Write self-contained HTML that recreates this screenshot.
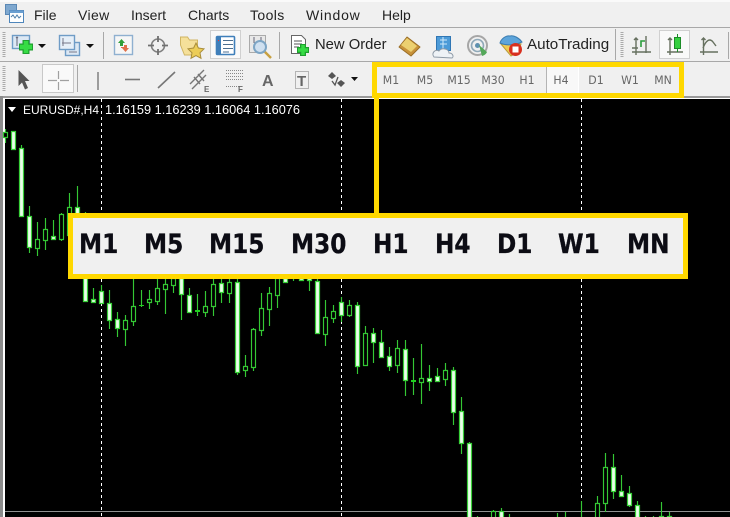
<!DOCTYPE html>
<html><head><meta charset="utf-8"><style>
html,body{margin:0;padding:0;background:#f0f0f0}
#p{position:relative;width:730px;height:517px;overflow:hidden;background:#f0f0f0;font-family:"Liberation Sans",sans-serif}
.a{position:absolute;white-space:nowrap}
.m{top:7px;font-size:14px;line-height:17px;color:#222}
.t{line-height:18px;color:#222;top:36px}
.s{top:74px;font-family:"DejaVu Sans",sans-serif;font-size:11.5px;line-height:13px;color:#666;width:34px;text-align:center;transform:scaleX(.95)}
.b{top:228px;font-family:"DejaVu Sans",sans-serif;font-weight:bold;font-size:27px;line-height:34px;color:#0c0c14;transform-origin:0 50%;transform:scaleX(.86);-webkit-text-stroke:.35px #0c0c14}
svg{position:absolute;left:0;top:0}
</style></head><body><div id="p">
<div class="a" style="left:0;top:0;width:730px;height:2px;background:#fafafa"></div>
<div class="a" style="left:0;top:27px;width:730px;height:1px;background:#a8a8a8"></div>
<div class="a" style="left:0;top:61px;width:730px;height:1px;background:#a8a8a8"></div>
<div class="a" style="left:0;top:96px;width:730px;height:2px;background:#9a9a9a"></div>
<div class="a" style="left:0;top:98px;width:730px;height:1px;background:#fff"></div>
<div class="a" style="left:0;top:99px;width:730px;height:418px;background:#000"></div>
<div class="a" style="left:0;top:96px;width:3px;height:421px;background:#8c8c8c"></div>
<div class="a" style="left:3px;top:98px;width:2px;height:419px;background:#fff"></div>

<!-- selected buttons -->
<div class="a" style="left:210px;top:30px;width:31px;height:29px;background:#f9f9f9;outline:1px solid #d0d0d0;outline-offset:-1px"></div>
<div class="a" style="left:659px;top:30px;width:31px;height:29px;background:#f9f9f9;outline:1px solid #d0d0d0;outline-offset:-1px"></div>
<div class="a" style="left:42px;top:64px;width:32px;height:29px;background:#f9f9f9;outline:1px solid #c8c8c8;outline-offset:-1px"></div>

<svg width="730" height="517" viewBox="0 0 730 517">
<!-- chart -->
<path d="M5 511.5H730" stroke="#8f8f8f" fill="none"/>
<path stroke="#fff" stroke-dasharray="3 3" fill="none" d="M101.5 99V517M341.5 99V517M581.5 99V517"/>
<path fill="none" stroke="#34c834" stroke-width="1.15" d="M5.5 129V143M13.5 131V150M21.5 145V217M29.5 206V253M37.5 222V256M45.5 218V250M53.5 220V240M61.5 213V241M69.5 193V240M77.5 186V240M85.5 212V302M93.5 288V303M101.5 285V303M109.5 290V329M117.5 312V337M125.5 315V346M133.5 278V326M141.5 290V307M149.5 290V309M157.5 278V305M165.5 278V314M173.5 278V293M181.5 278V320M189.5 288V313M197.5 294V316M205.5 291V317M213.5 278V316M221.5 278V303M229.5 278V303M237.5 278V375M245.5 355V377M253.5 328V371M261.5 293V336M269.5 287V326M277.5 278V308M285.5 278V283M293.5 278V281M301.5 278V281M309.5 278V291M317.5 278V334M325.5 300V346M333.5 305V323M341.5 297V322M349.5 300V317M357.5 302V374M365.5 326V366M373.5 328V363M381.5 330V358M389.5 347V371M397.5 340V373M405.5 340V396M413.5 358V395M421.5 344V404M429.5 365V391M437.5 368V382M445.5 363V386M453.5 367V425M461.5 397V454M469.5 442V517M477.5 516V517M493.5 510V517M501.5 508V517M509.5 514V517M557.5 513V517M565.5 512V517M581.5 501V517M597.5 496V517M605.5 453V512M613.5 454V499M621.5 475V497M629.5 486V507M637.5 501V517M645.5 516V517M653.5 516V517M661.5 502V517M669.5 512V517"/>
<path fill="#000" stroke="#34c834" stroke-width="1.15" d="M3.5 132.5h4v5h-4zM35.5 239.5h4v9h-4zM43.5 229.5h4v11h-4zM59.5 214.5h4v25h-4zM67.5 207.5h4v28h-4zM123.5 320.5h4v9h-4zM131.5 306.5h4v15h-4zM147.5 299.5h4v3h-4zM155.5 288.5h4v13h-4zM163.5 284.5h4v5h-4zM171.5 278.5h4v7h-4zM203.5 306.5h4v6h-4zM211.5 284.5h4v22h-4zM227.5 282.5h4v11h-4zM243.5 366.5h4v4h-4zM251.5 329.5h4v38h-4zM259.5 308.5h4v22h-4zM267.5 293.5h4v16h-4zM275.5 278.5h4v17h-4zM323.5 317.5h4v17h-4zM331.5 311.5h4v7h-4zM347.5 305.5h4v10h-4zM363.5 333.5h4v32h-4zM395.5 348.5h4v17h-4zM419.5 378.5h4v4h-4zM443.5 370.5h4v9h-4zM491.5 511.5h4v7h-4zM595.5 503.5h4v15h-4zM603.5 467.5h4v36h-4z"/>
<path fill="#eaffea" stroke="#38d038" stroke-width="1.2" d="M11.5 131.5h4v18h-4zM19.5 148.5h4v68h-4zM27.5 216.5h4v31h-4zM51.5 236.5h4v3h-4zM75.5 207.5h4v28h-4zM83.5 240.5h4v61h-4zM91.5 299.5h4v3h-4zM99.5 291.5h4v12h-4zM107.5 303.5h4v17h-4zM115.5 319.5h4v9h-4zM179.5 278.5h4v16h-4zM187.5 295.5h4v17h-4zM219.5 283.5h4v9h-4zM235.5 282.5h4v90h-4zM283.5 278.5h4v4h-4zM299.5 278.5h4v2h-4zM307.5 278.5h4v2h-4zM315.5 281.5h4v52h-4zM339.5 302.5h4v13h-4zM355.5 305.5h4v61h-4zM371.5 333.5h4v9h-4zM379.5 342.5h4v15h-4zM387.5 356.5h4v10h-4zM403.5 349.5h4v31h-4zM427.5 378.5h4v3h-4zM435.5 376.5h4v5h-4zM451.5 370.5h4v42h-4zM459.5 411.5h4v32h-4zM467.5 443.5h4v76h-4zM499.5 511.5h4v7h-4zM611.5 467.5h4v24h-4zM619.5 491.5h4v5h-4zM627.5 493.5h4v12h-4zM635.5 505.5h4v14h-4zM659.5 516.5h4v4h-4zM667.5 516.5h4v4h-4z"/>
<path fill="#1fd01f" d="M139 305h5v1h-5zM195 310h5v2h-5zM411 380h5v2h-5z"/>
<path d="M8 107h8l-4 5z" fill="#fff"/>

<!-- app icon -->
<rect x="5.5" y="4.5" width="11" height="10" fill="#7fa8cf" stroke="#5b88b5"/>
<rect x="9.5" y="10.5" width="14" height="12" fill="#fff" stroke="#4f86bb"/>
<path d="M11 17l2-2 2 3 2-3 2 3 2-2" fill="none" stroke="#4f7faa"/>
<rect x="9.5" y="10.5" width="14" height="2.5" fill="#6b9fd0"/>

<!-- grips -->
<path d="M4 32V58M4 66V92M622 32V58" stroke="#aaa" stroke-width="3" stroke-dasharray="1 1" fill="none"/>
<!-- separators -->
<path d="M103.5 32V59M279.5 32V59M615.5 29V60M728.5 32V59M77.5 65V92" stroke="#a8a8a8" fill="none"/>

<!-- new chart -->
<rect x="12.5" y="35.5" width="17" height="13" fill="#dce8f4" stroke="#6f9cc6" stroke-width="1.4"/>
<path d="M17 38v8M16 38l1-1 1 1M21 44h6" stroke="#667" fill="none"/>
<path d="M26 40v14M19 47h14" stroke="#1f9f2f" stroke-width="7" fill="none"/>
<path d="M26 41v12M20 47h12" stroke="#36dc44" stroke-width="4.5" fill="none"/>
<path d="M38 44h8l-4 4zM86 44h8l-4 4z" fill="#111"/>
<!-- profiles -->
<rect x="65.5" y="42.5" width="14" height="13" fill="#dce8f4" stroke="#6f9cc6" stroke-width="1.4"/>
<rect x="59.5" y="35.5" width="15" height="14" fill="#e6eff8" stroke="#6f9cc6" stroke-width="1.4"/>
<path d="M63 38v8M62 43h9M69 52h8" stroke="#778" fill="none"/>
<!-- market watch -->
<rect x="114.5" y="35.5" width="18" height="19" fill="#f6f6f6" stroke="#8fb0d0" stroke-width="1.4"/>
<path d="M118 43l3.500-4 3.500 4h-2v3h-3v-3z" fill="#2f9f3a"/>
<path d="M121 47h3v-2h3v3h2l-3.500 4-3.500-4h-1z" fill="#e0704a"/>
<!-- crosshair -->
<circle cx="158" cy="45.500" r="6.500" fill="none" stroke="#808080" stroke-width="1.600"/>
<path d="M158 36V42M158 49V55M148 45.500H154M162 45.500H168" stroke="#707070" stroke-width="1.800" fill="none"/>
<!-- folder star -->
<path d="M180.500 37h7l2 3h8v5l-6 10h-7l-4-10z" fill="#f5e09a" stroke="#d0b563"/>
<path d="M196 43l2.400 5 5.600.800-4 4 1 5.500-5-2.700-5 2.700 1-5.500-4-4 5.600-.800z" fill="#eccd58" stroke="#a88c3a"/>
<!-- navigator -->
<rect x="216.500" y="36.500" width="18" height="18" rx="1" fill="#fff" stroke="#3f7fba" stroke-width="1.600"/>
<rect x="216.500" y="36.500" width="4.500" height="18" fill="#3f7fba"/>
<path d="M223 40.500h10M223 44.500h10M223 48.500h10M223 52h6" stroke="#4d6f90" fill="none"/>
<path d="M218.500 40v1" stroke="#e33"/>
<!-- terminal magnifier -->
<rect x="249.500" y="35.500" width="16" height="17" fill="#e8e8e8" stroke="#aaa"/>
<path d="M254 37v6M261 37v6" stroke="#667" fill="none"/>
<circle cx="260" cy="47" r="6" fill="#cfe0f0" stroke="#7da5c5" stroke-width="2"/>
<path d="M265 52l6 6" stroke="#c8a040" stroke-width="2.500"/>
<!-- new order -->
<path d="M291.500 35.500h10l4 4v14h-14z" fill="#fff" stroke="#666"/>
<path d="M294 41h8M294 44h8M294 47h5" stroke="#555" fill="none"/>
<path d="M303 44v12M297 50h12" stroke="#1f9f2f" stroke-width="6" fill="none"/>
<path d="M303 45v10M298 50h10" stroke="#36dc44" stroke-width="3.500" fill="none"/>
<!-- book -->
<path d="M399 47l8-10 13 10-9 9z" fill="#c8923a" stroke="#9a6e26" stroke-linejoin="round"/>
<path d="M401 45l6-7 10 8-6 6z" fill="#ecd070"/>
<!-- signals -->
<rect x="436.500" y="36.500" width="14" height="14" fill="#4d9bd8" stroke="#2f76b4"/>
<path d="M440 40h7M440 44h7M443 37v12" stroke="#cfe8fa" fill="none"/>
<path d="M434 57c-3-4 1-8 5-6 3-4 10-2 10 2 4 0 5 4 3 5z" fill="#eef2f6" stroke="#8e9aa6"/>
<!-- radio -->
<circle cx="477.500" cy="45.500" r="9.500" fill="none" stroke="#a6a6a6" stroke-width="2"/>
<circle cx="477.500" cy="45.500" r="6" fill="none" stroke="#8fa8b8" stroke-width="1.600"/>
<circle cx="477.500" cy="45.500" r="2.500" fill="#5f90b0"/>
<path d="M479 45l3 11c3-1 4-2 5-4z" fill="#54a85a"/>
<!-- autotrading -->
<path d="M501 44l10 12 7-4 3-8z" fill="#efcb52" stroke="#b89a3a"/>
<path d="M500 43c1-4 6-8 10-7 4-1 9 2 12 6-6 3-16 4-22 1z" fill="#5ca4da" stroke="#3b7cb0"/>
<circle cx="515.500" cy="49.500" r="6.500" fill="#d8301f"/>
<rect x="512.500" y="46.500" width="6" height="6" fill="#fff"/>
<!-- chart type -->
<path d="M632 52h19M636 38v17M646 36v17M634 40l2-2 2 2M632 48h6" stroke="#66705f" stroke-width="1.400" fill="none"/>
<path d="M641 47v-6h4" stroke="#2b9e3c" stroke-width="1.600" fill="none"/>
<path d="M667 52h16M670 38v17M668 40l2-2 2 2" stroke="#66705f" stroke-width="1.400" fill="none"/>
<rect x="674.500" y="37.500" width="6" height="11" fill="#35d040" stroke="#1c8c28"/>
<path d="M677.500 34v3M677.500 49v3" stroke="#1c8c28"/>
<path d="M700 52h18M703.500 38v17M701.500 40l2-2 2 2M703 48c3-8 7-10 10-6l3 4" stroke="#66705f" stroke-width="1.400" fill="none"/>

<!-- row 2 -->
<path d="M18.500 70l11 11h-4.500l3 7-3 1.500-3-7-3.500 3.500z" fill="#555"/>
<path d="M48 80.500h9M60 80.500h9M58.500 71v8M58.500 82v8" stroke="#a0a0a0" fill="none" stroke-width="1.200"/>
<path d="M98 72V90" stroke="#888" stroke-width="1.600"/>
<path d="M125 79.500H140" stroke="#777" stroke-width="1.600"/>
<path d="M158 88L175 72" stroke="#777" stroke-width="1.600"/>
<path d="M190 84l14-14M192 89l14-14M194 77l6 7M198 74l6 7" stroke="#777" stroke-width="1.400" fill="none"/>
<text x="204" y="92" font-family="Liberation Sans" font-weight="bold" font-size="8" fill="#666">E</text>
<path d="M226 70.500h17M226 73.500h17M226 76.500h17M226 79.500h17M226 86.500h13" stroke="#888" stroke-dasharray="1 1" fill="none"/>
<text x="238" y="92" font-family="Liberation Sans" font-weight="bold" font-size="8" fill="#666">F</text>
<text x="262" y="86" font-family="Liberation Sans" font-weight="bold" font-size="16" fill="#666">A</text>
<rect x="295.500" y="71.500" width="13" height="17" fill="none" stroke="#777" stroke-dasharray="1 1"/>
<text x="297" y="86" font-family="Liberation Sans" font-weight="bold" font-size="15" fill="#666">T</text>
<path d="M328 76l4-4 4 4-4 3zM337 83l4-3 4 3-4 4z" fill="#555"/>
<path d="M332 81l3 4 3-8" stroke="#555" stroke-width="1.300" fill="none"/>
<path d="M351 77h7l-3.500 4z" fill="#111"/>
</svg>

<!-- menu -->
<span class="a m" style="left:34px">File</span>
<span class="a m" style="left:78px;letter-spacing:.4px">View</span>
<span class="a m" style="left:131px">Insert</span>
<span class="a m" style="left:188px">Charts</span>
<span class="a m" style="left:250px;letter-spacing:.4px">Tools</span>
<span class="a m" style="left:306px;letter-spacing:.8px">Window</span>
<span class="a m" style="left:382px">Help</span>
<span class="a t" style="left:315px;font-size:14.8px">New Order</span>
<span class="a t" style="left:527px;font-size:15.2px">AutoTrading</span>

<!-- chart label -->
<span class="a" style="left:23px;top:103px;font-size:12px;line-height:14px;color:#fff">EURUSD#,H4</span>
<span class="a" style="left:105px;top:103px;font-size:12.75px;line-height:14px;color:#fff">1.16159 1.16239 1.16064 1.16076</span>

<!-- timeframe frame -->
<div class="a" style="left:374px;top:96px;width:5px;height:120px;background:#ffd800"></div>
<div class="a" style="left:372px;top:62px;width:302px;height:26px;box-sizing:content-box;border:5px solid #ffd800;background:#f0f0f0"></div>
<div class="a" style="left:546px;top:67px;width:1px;height:26px;background:#b4b4b4"></div>
<div class="a" style="left:547px;top:67px;width:31px;height:26px;background:#f8f8f8;border-right:1px solid #fff"></div>
<span class="a s" style="left:374px">M1</span>
<span class="a s" style="left:408px">M5</span>
<span class="a s" style="left:442px">M15</span>
<span class="a s" style="left:476px">M30</span>
<span class="a s" style="left:510px">H1</span>
<span class="a s" style="left:544px">H4</span>
<span class="a s" style="left:579px">D1</span>
<span class="a s" style="left:613px">W1</span>
<span class="a s" style="left:646px">MN</span>

<!-- callout -->
<div class="a" style="left:68px;top:213px;width:610px;height:56px;border:5px solid #ffd800;background:#f0f0f0"></div>
<span class="a b" style="left:79px">M1</span>
<span class="a b" style="left:144px">M5</span>
<span class="a b" style="left:209px">M15</span>
<span class="a b" style="left:291px">M30</span>
<span class="a b" style="left:373px">H1</span>
<span class="a b" style="left:435px">H4</span>
<span class="a b" style="left:497px">D1</span>
<span class="a b" style="left:558px">W1</span>
<span class="a b" style="left:627px">MN</span>
</div></body></html>
